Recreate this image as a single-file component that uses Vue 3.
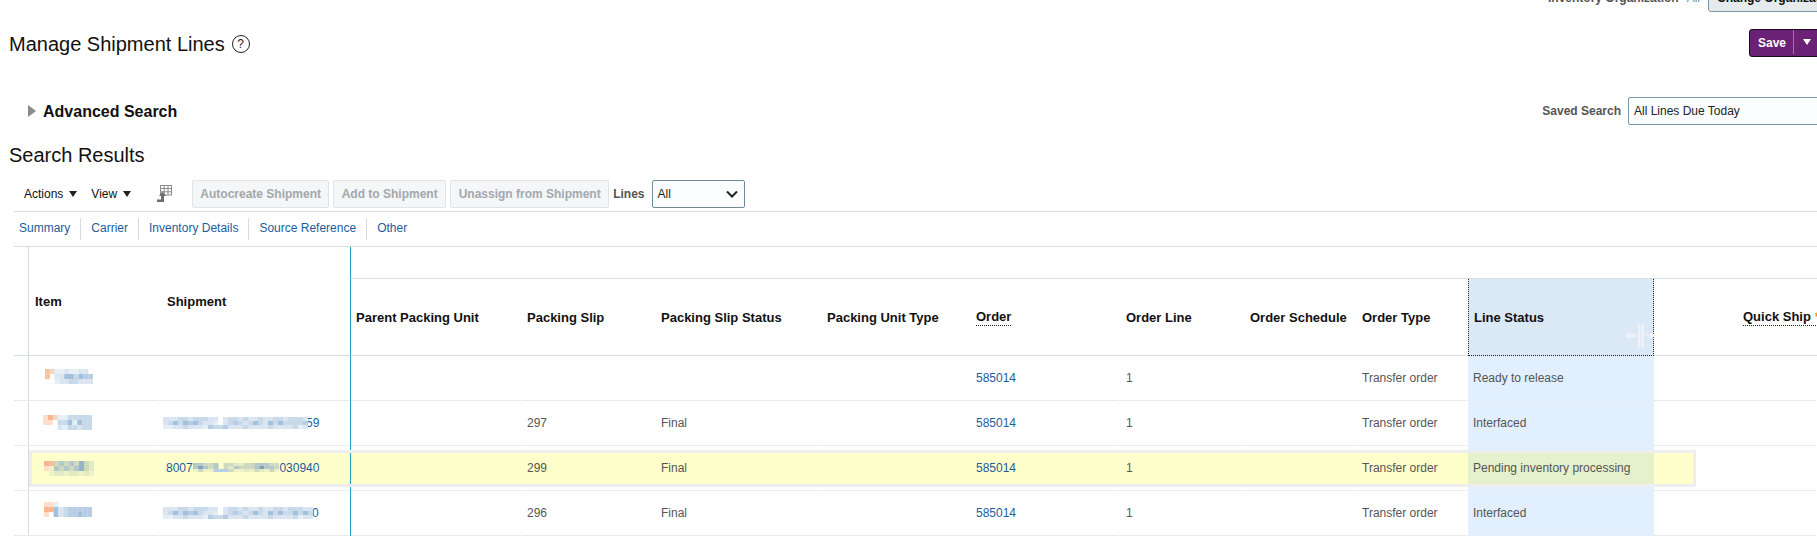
<script setup>
const palette = {
  o: '#fdc39e', p: '#fddfcc', q: '#eed6c8', k: '#fbb48f', l: '#f4bfa0',
  a: '#e6eef6', b: '#dbe5f1', c: '#c8d9ea', d: '#a3c0dc', e: '#b7cde3',
  g: '#cfd9bf', h: '#b2c8c9', i: '#e2eac4', j: '#eef2c4', m: '#94b4ca', n: '#7fa3bd'
}
function mosaic(rows, w, h, cls) {
  const cells = []
  rows.forEach((r, y) => {
    [...r].forEach((ch, x) => {
      if (palette[ch]) cells.push({ k: x + '-' + y, x: x * w, y: y * h, w: w + 0.1, h: h + 0.1, f: palette[ch] })
    })
  })
  return { cells, width: rows[0].length * w, height: rows.length * h, cls }
}
const itemMarks = [
  mosaic(['oqaabaabb.', 'o.bbddcdee', '..abbccbbb'], 4.8, 5, 'mark-a'),
  mosaic(['pkqaaccccc', 'pp.ccdadcc', '...baccbcc'], 4.9, 5, 'mark-b'),
  mosaic(['klghghgmgi', 'pjhghghmgi', '.jiijiijij'], 5, 5, 'mark-c'),
  mosaic(['ppa.......', 'kkdbceeeee', 'p.dbceedee'], 4.8, 5, 'mark-d')
]
const shipTop = mosaic([
  'bbbccbcccbb.bccbcbbcbbccbcccb',
  'bcdcdedcbba.bcecbcdcbdcdcccce',
  'aabbcbbbaeccebbbcbbbbcbbbbcab'
], 5, 4, 'smark-top')
const shipMid = mosaic([
  'hhggh.ggiigghhhgg',
  'hnhgh.gihggghnhhg',
  'jgjjeeegjjijgijgj'
], 5.1, 3, 'smark-mid')
const shipLow = mosaic([
  'bbbccbcccbb.bccbcbbcbbccbcccbb',
  'bcdcdedcbba.bcecbcdcbdcdccdcdc',
  'aabbcbbbaeccebbbcbbbbcbbbbcabb'
], 5, 4, 'smark-low')

const cols = [
  { key: 'parent', label: 'Parent Packing Unit' },
  { key: 'slip', label: 'Packing Slip' },
  { key: 'slipStatus', label: 'Packing Slip Status' },
  { key: 'unitType', label: 'Packing Unit Type' },
  { key: 'order', label: 'Order', dotted: true },
  { key: 'line', label: 'Order Line' },
  { key: 'schedule', label: 'Order Schedule' },
  { key: 'type', label: 'Order Type' }
]
const rows = [
  { id: 1, mark: itemMarks[0], slip: '', slipStatus: '', status: 'Ready to release', ship: null },
  { id: 2, mark: itemMarks[1], slip: '297', slipStatus: 'Final', status: 'Interfaced', ship: { before: '', m: shipTop, after: '59' } },
  { id: 3, mark: itemMarks[2], slip: '299', slipStatus: 'Final', status: 'Pending inventory processing', hl: true, ship: { before: '8007', m: shipMid, after: '030940' } },
  { id: 4, mark: itemMarks[3], slip: '296', slipStatus: 'Final', status: 'Interfaced', ship: { before: '', m: shipLow, after: '0' } }
]
const tabs = ['Summary', 'Carrier', 'Inventory Details', 'Source Reference', 'Other']
</script>

<template>
  <div class="page">
    <div class="topbar">
      <span class="org-label">Inventory Organization</span>
      <span class="org-val">All</span>
      <span class="org-btn">Change Organization</span>
    </div>

    <div class="title-row">
      <h1 class="title">Manage Shipment Lines</h1>
      <span class="help">?</span>
      <div class="save">
        <span class="save-text">Save</span>
        <span class="save-div"></span>
        <span class="save-arrow"></span>
      </div>
    </div>

    <div class="search-row">
      <span class="disclosure"></span>
      <span class="adv">Advanced Search</span>
      <span class="saved-label">Saved Search</span>
      <div class="saved-input">All Lines Due Today</div>
    </div>

    <h2 class="results">Search Results</h2>

    <div class="toolbar">
      <span class="menu first">Actions</span><span class="tri"></span>
      <span class="menu">View</span><span class="tri"></span>
      <svg class="tool-icon" width="15" height="17" viewBox="0 0 15 17">
        <g fill="none" stroke="#8c8c8c" stroke-width="1">
          <rect x="3.500" y="0.500" width="11" height="9.500" />
          <path d="M3.500 3.500h11M3.500 6.800h11M7.200 .5v9.500M11 .5v9.500" />
        </g>
        <path d="M0 17v-2.500h4V11H2l3.500-4.500L9 11H7v6z" fill="#6f6f6f" />
      </svg>
      <button class="tbtn autocreate">Autocreate Shipment</button>
      <button class="tbtn">Add to Shipment</button>
      <button class="tbtn unassign">Unassign from Shipment</button>
      <span class="lines-label">Lines</span>
      <div class="select">
        <span>All</span>
        <svg width="12" height="8" viewBox="0 0 12 8"><path d="M1 1.500l5 5 5-5" fill="none" stroke="#222" stroke-width="2" /></svg>
      </div>
    </div>

    <div class="tabs">
      <a v-for="t in tabs" :key="t" class="tab">{{ t }}</a>
    </div>

    <div class="table">
      <div class="grid head">
        <div class="sel hsel"></div>
        <div class="hcell frozen"><span>Item</span></div>
        <div class="hcell frozen shiphead"><span>Shipment</span></div>
        <div class="hband"></div>
        <div v-for="(c, i) in cols" :key="c.key" class="hcell lower" :class="{ teal: i === 0 }">
          <span :class="{ dotted: c.dotted }">{{ c.label }}</span>
        </div>
        <div class="hcell lower active">
          <span>Line Status</span>
          <svg class="resize" width="32" height="26" viewBox="0 0 32 26">
            <path d="M0 12.500l5-4v2.500h6v3H5v2.500z" fill="#eef2f6" />
            <rect x="13" y="1" width="2.500" height="24" fill="#eef2f6" />
            <rect x="16.500" y="1" width="2.500" height="24" fill="#eef2f6" />
            <path d="M21 11.500h5V9l5 3.500-5 3.500v-2.500h-5z" fill="#f1f1f1" />
          </svg>
        </div>
        <div class="hcell lower quick"><span class="dotted">Quick Ship<i class="star">*</i></span></div>
      </div>

      <div v-for="r in rows" :key="r.id" class="grid row">
        <div class="sel cell"></div>
        <div class="cell">
          <svg class="mark" :class="r.mark.cls" :width="r.mark.width" :height="r.mark.height">
            <rect v-for="m in r.mark.cells" :key="m.k" :x="m.x" :y="m.y" :width="m.w" :height="m.h" :fill="m.f" />
          </svg>
        </div>
        <div class="cell link ship">
          <span v-if="r.ship" class="txt shipline">
            {{ r.ship.before }}<svg class="smark" :class="r.ship.m.cls" :width="r.ship.m.width" :height="r.ship.m.height">
              <rect v-for="m in r.ship.m.cells" :key="m.k" :x="m.x" :y="m.y" :width="m.w" :height="m.h" :fill="m.f" />
            </svg>{{ r.ship.after }}
          </span>
        </div>
        <div class="cell teal"></div>
        <div class="cell"><span class="txt">{{ r.slip }}</span></div>
        <div class="cell"><span class="txt">{{ r.slipStatus }}</span></div>
        <div class="cell"></div>
        <div class="cell link"><span class="txt">585014</span></div>
        <div class="cell"><span class="txt num">1</span></div>
        <div class="cell"></div>
        <div class="cell"><span class="txt">Transfer order</span></div>
        <div class="cell status"><span class="txt">{{ r.status }}</span></div>
        <div class="cell"></div>
        <div v-if="r.hl" class="hl">
          <span class="hl-teal"></span>
          <span class="hl-green"></span>
        </div>
      </div>
    </div>
  </div>
</template>

<style scoped>
.page {
  width: 1817px;
  height: 536px;
  overflow: hidden;
  background: #fff;
  font-family: "Liberation Sans", Arial, sans-serif;
  font-size: 12px;
  color: #555;
}
.topbar {
  height: 12px;
  display: flex;
  align-items: flex-end;
  padding-left: 1548px;
  overflow: hidden;
  white-space: nowrap;
}
.org-label { font-weight: 700; margin-bottom: 7px; line-height: 14px; }
.org-val { margin-left: 8px; margin-bottom: 7px; line-height: 14px; color: #7a8fa6; }
.org-btn {
  margin-left: 8px;
  flex: none;
  width: 150px;
  height: 28px;
  line-height: 26px;
  padding-left: 8px;
  box-sizing: border-box;
  background: #e6eaed;
  border: 1px solid #7f97a8;
  border-radius: 3px;
  color: #111;
  font-weight: 700;
}
.title-row {
  display: flex;
  align-items: center;
  height: 28px;
  margin-top: 17px;
  padding-left: 9px;
}
.title { margin: 2px 0 0; font-size: 20px; font-weight: 400; color: #111; line-height: 26px; }
.help {
  width: 16px;
  height: 16px;
  margin: 2px 0 0 7px;
  border: 1px solid #222;
  border-radius: 50%;
  text-align: center;
  line-height: 16px;
  font-size: 12px;
  color: #222;
}
.save {
  margin-left: auto;
  flex: none;
  width: 80px;
  margin-right: -12px;
  height: 28px;
  box-sizing: border-box;
  background: #6b2175;
  border: 1px solid #1a0a1c;
  border-radius: 3px;
  display: flex;
  align-items: center;
  color: #fff;
  font-weight: 700;
}
.save-text { margin-left: 8px; }
.save-div { width: 1px; height: 24px; background: #8f7aa3; margin-left: 7px; margin-bottom: 2px; }
.save-arrow {
  margin-left: 9px;
  margin-bottom: 3px;
  border-left: 4.500px solid transparent;
  border-right: 4.500px solid transparent;
  border-top: 6px solid #fff;
}
.search-row {
  display: flex;
  align-items: center;
  height: 28px;
  margin-top: 40px;
  padding-left: 28px;
}
.disclosure {
  border-left: 8px solid #8a8a8a;
  border-top: 6.500px solid transparent;
  border-bottom: 6.500px solid transparent;
}
.adv { margin: 2px 0 0 7px; font-size: 16px; font-weight: 700; color: #111; }
.saved-label { margin-left: auto; font-weight: 700; color: #555; }
.saved-input {
  flex: none;
  width: 210px;
  height: 28px;
  margin-left: 7px;
  margin-right: -21px;
  padding-left: 5px;
  box-sizing: border-box;
  border: 1px solid #7d97a8;
  border-radius: 2px;
  background: #fbfdff;
  color: #222;
  line-height: 26px;
}
.results {
  margin: 18px 0 0;
  padding-left: 9px;
  height: 24px;
  line-height: 24px;
  font-size: 20px;
  font-weight: 400;
  color: #111;
}
.toolbar {
  display: flex;
  align-items: center;
  height: 28px;
  margin: 13px 0 0 14px;
  padding-bottom: 3px;
  border-bottom: 1px solid #d8dfe4;
}
.menu { color: #111; margin-left: 14px; }
.menu.first { margin-left: 10px; }
.tri {
  margin-left: 6px;
  border-left: 4.500px solid transparent;
  border-right: 4.500px solid transparent;
  border-top: 6px solid #222;
}
.tool-icon { margin-left: 26px; margin-bottom: 1px; }
.tbtn {
  height: 28px;
  margin-left: 4px;
  padding: 0;
  box-sizing: border-box;
  background: #f4f6f7;
  border: 1px solid #dfe4e8;
  border-radius: 2px;
  color: #a3a8ad;
  font: 700 12px "Liberation Sans", Arial, sans-serif;
  width: 113px;
}
.tbtn.autocreate { width: 137px; margin-left: 20px; }
.tbtn.unassign { width: 159px; }
.lines-label { margin-left: 4px; font-weight: 700; color: #555; }
.select {
  width: 93px;
  height: 28px;
  box-sizing: border-box;
  margin-left: 7px;
  padding: 0 6px 0 5px;
  border: 1px solid #6f8a9c;
  border-radius: 2px;
  background: #fbfdff;
  color: #222;
  display: flex;
  align-items: center;
  justify-content: space-between;
}
.tabs {
  display: flex;
  align-items: center;
  height: 34px;
  margin-left: 14px;
  border-bottom: 1px solid #d8dfe4;
}
.tab {
  color: #1d5c9e;
  height: 22px;
  line-height: 20px;
  padding: 0 10px;
  border-right: 1px solid #d3dde3;
}
.tab:first-child { padding-left: 5px; }
.tab:last-child { border-right: 0; }
.table { margin-left: 14px; }
.grid {
  display: grid;
  grid-template-columns: 15px 131px 190px 171px 134px 166px 149px 150px 124px 112px 112px 186px 163px;
}
.head { grid-template-rows: 32px 77px; height: 109px; }
.hsel { grid-row: 1 / span 2; border-bottom: 1px solid #d6dfe6; }
.frozen {
  grid-row: 1 / span 2;
  border-bottom: 1px solid #d6dfe6;
}
.hcell {
  display: flex;
  align-items: center;
  padding-left: 6px;
  font-size: 13px;
  font-weight: 700;
  color: #111;
  white-space: nowrap;
  box-sizing: border-box;
  position: relative;
}
.shiphead { padding-left: 7px; }
.hband { grid-column: 4 / -1; border-bottom: 1px solid #d6dfe6; border-left: 1px solid #1ca3c4; }
.lower { border-bottom: 1px solid #d6dfe6; }
.sel { border-right: 1px solid #d3dae1; }
.teal { border-left: 1px solid #1ca3c4; }
.hcell.teal { padding-left: 5px; }
.dotted { border-bottom: 1px dotted #222; line-height: 15px; padding-bottom: 1px; }
.star { color: #e8890c; font-style: normal; margin-left: 4px; }
.active {
  background: #dbe8f5;
  border-left: 1px dotted #222;
  border-right: 1px dotted #222;
  border-bottom: 1px dotted #222;
  padding-left: 5px;
}
.quick { padding-left: 89px; }
.resize { position: absolute; right: -4px; top: 44px; }
.row { height: 45px; position: relative; }
.cell {
  position: relative;
  display: flex;
  align-items: center;
  padding: 0 0 2px 6px;
  box-sizing: border-box;
  height: 45px;
  white-space: nowrap;
}
.cell::after {
  content: "";
  position: absolute;
  left: 0;
  right: 1px;
  bottom: 0;
  height: 1px;
  background: #e8eaec;
}
.cell.sel { padding-left: 0; }
.txt { position: relative; z-index: 2; }
.num { opacity: .99; color: #555; }
.link { color: #1d5c9e; }
.ship { padding-left: 3px; }
.shipline { display: inline-flex; align-items: center; }
.smark { flex: none; display: block; position: relative; z-index: 1; }
.smark-top { margin-right: -2px; margin-top: 1px; }
.smark-mid { margin-right: 0; }
.smark-low { margin-right: -1px; margin-top: 1px; }
.shipline:has(.smark-mid) { padding-left: 3px; }
.mark { display: block; position: relative; z-index: 2; align-self: flex-start; }
.mark-a { margin: 13px 0 0 10px; }
.mark-b { margin: 14px 0 0 8px; }
.mark-c { margin: 15px 0 0 9px; }
.mark-d { margin: 11px 0 0 9px; }
.status { background: #e1effe; padding-left: 5px; }
.status::after { background: #e6edf5; right: 0; }
.hl {
  position: absolute;
  left: 15px;
  top: 4px;
  width: 1667px;
  height: 37px;
  box-sizing: border-box;
  background: #ffffcc;
  border: 3px solid #eee;
  z-index: 1;
}
.hl-teal {
  position: absolute;
  left: 318px;
  top: 0;
  bottom: 0;
  width: 1px;
  background: #1ca3c4;
}
.hl-green {
  position: absolute;
  left: 1436px;
  width: 186px;
  top: 0;
  bottom: 0;
  background: #e5f0cd;
}
</style>

<style>
html, body { margin: 0; overflow: hidden; background: #fff; }
</style>
